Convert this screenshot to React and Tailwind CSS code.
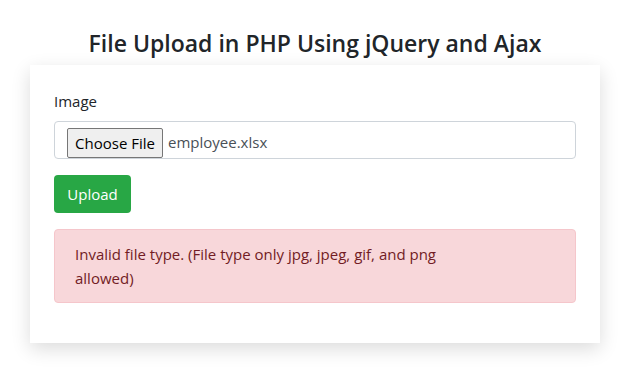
export default function App() {
    const font = { fontFamily: '"Segoe UI", "Open Sans", "Liberation Sans", sans-serif' };

    return (
        <div className="min-h-screen bg-white text-[#212529]" style={font}>
            <div className="ml-[30px] w-[570px] pt-[29px]">
                {/* Heading */}
                <h3 className="text-center text-[23px] font-semibold leading-[29px] mb-[7px] text-[#212529]">
                    File Upload in PHP Using jQuery and Ajax
                </h3>

                {/* Card */}
                <div className="bg-white p-6 shadow-[0_6px_18px_rgba(0,0,0,0.14)]">
                    <div className="mb-4">
                        <label className="block text-[15px] leading-6 mb-2 text-[#212529]">Image</label>
                        <div className="h-[38px] border border-[#ced4da] rounded pl-3 pt-[6px] flex items-start">
                            <button className="h-[30px] w-[96px] bg-[#efefef] border border-[#767676] rounded-[2px] text-[15px] text-black leading-none">
                                Choose File
                            </button>
                            <span className="ml-[5px] text-[15px] leading-[29px] text-[#495057]">employee.xlsx</span>
                        </div>
                    </div>

                    <button className="h-[38px] w-[77px] bg-[#28a745] text-white text-[15px] rounded mb-4">
                        Upload
                    </button>

                    <div className="bg-[#f8d7da] border border-[#f5c6cb] rounded px-5 py-3 mb-4 text-[#721c24] text-[15px] leading-6">
                        <p className="max-w-[400px]">
                            Invalid file type. (File type only jpg, jpeg, gif, and png allowed)
                        </p>
                    </div>
                </div>
            </div>
        </div>
    );
}
